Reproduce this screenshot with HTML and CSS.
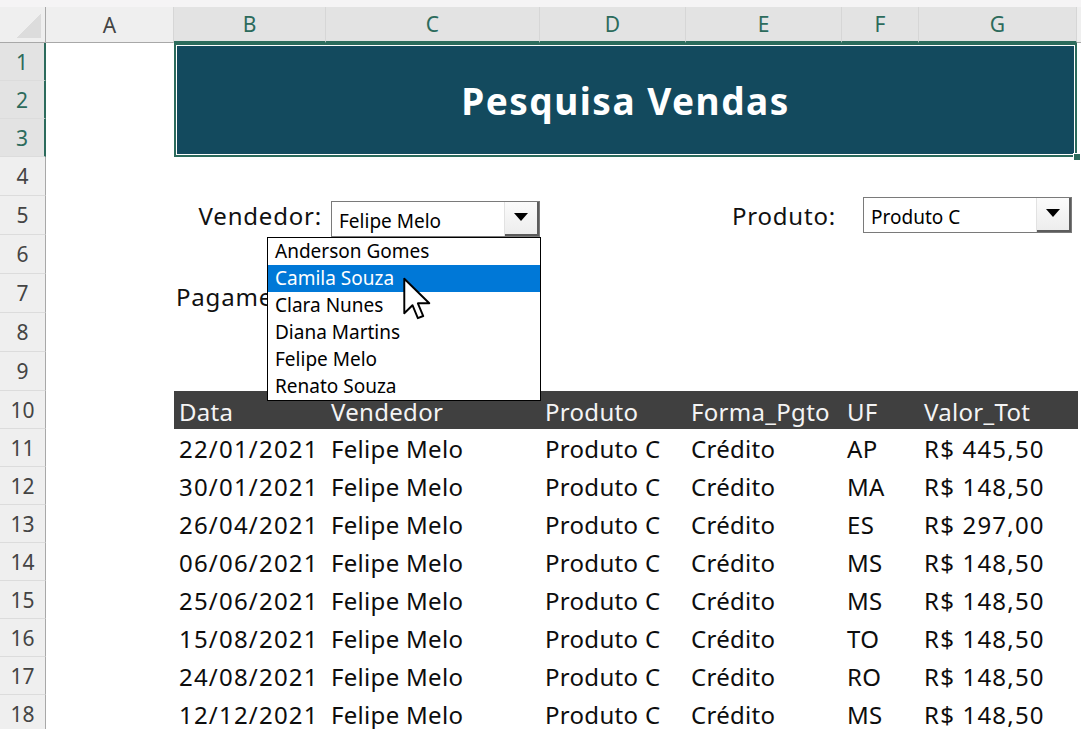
FILE: index.html
```html
<!DOCTYPE html>
<html lang="pt-BR">
<head>
    <meta charset="UTF-8">
    <meta name="viewport" content="width=device-width, initial-scale=1.0">
    <title>Pesquisa Vendas</title>
    <link rel="stylesheet" href="styles.css">
</head>
<body>
<div class="app">
    <div class="topbar"></div>
    <div class="sheet">
        <!-- column headers -->
        <div class="corner"></div>
        <div class="colhead">A</div>
        <div class="colhead sel">B</div>
        <div class="colhead sel">C</div>
        <div class="colhead sel">D</div>
        <div class="colhead sel">E</div>
        <div class="colhead sel">F</div>
        <div class="colhead sel">G</div>
        <div class="colhead filler"></div>

        <!-- row headers -->
        <div class="rowhead sel">1</div>
        <div class="rowhead sel">2</div>
        <div class="rowhead sel">3</div>
        <div class="rowhead">4</div>
        <div class="rowhead">5</div>
        <div class="rowhead">6</div>
        <div class="rowhead">7</div>
        <div class="rowhead">8</div>
        <div class="rowhead">9</div>
        <div class="rowhead">10</div>
        <div class="rowhead">11</div>
        <div class="rowhead">12</div>
        <div class="rowhead">13</div>
        <div class="rowhead">14</div>
        <div class="rowhead">15</div>
        <div class="rowhead">16</div>
        <div class="rowhead">17</div>
        <div class="rowhead">18</div>

        <div class="title">
            Pesquisa Vendas
            <span class="handle"></span>
        </div>

        <div class="label label-vend">Vendedor:</div>
        <div class="combo combo-vend">
            <span class="combo-text">Felipe Melo</span>
            <span class="combo-btn"><svg width="14" height="8" viewBox="0 0 14 8"><path d="M0 0H14L7 8Z" fill="#000"/></svg></span>
        </div>

        <div class="label label-prod">Produto:</div>
        <div class="combo combo-prod">
            <span class="combo-text">Produto C</span>
            <span class="combo-btn"><svg width="14" height="8" viewBox="0 0 14 8"><path d="M0 0H14L7 8Z" fill="#000"/></svg></span>
        </div>

        <!-- partly hidden behind the open list -->
        <div class="label label-pag">Pagamento:</div>

        <div class="table">
            <div class="th">Data</div>
            <div class="th">Vendedor</div>
            <div class="th">Produto</div>
            <div class="th">Forma_Pgto</div>
            <div class="th">UF</div>
            <div class="th">Valor_Tot</div>

            <div class="td">22/01/2021</div><div class="td">Felipe Melo</div><div class="td">Produto C</div><div class="td">Crédito</div><div class="td">AP</div><div class="td">R$ 445,50</div>
            <div class="td">30/01/2021</div><div class="td">Felipe Melo</div><div class="td">Produto C</div><div class="td">Crédito</div><div class="td">MA</div><div class="td">R$ 148,50</div>
            <div class="td">26/04/2021</div><div class="td">Felipe Melo</div><div class="td">Produto C</div><div class="td">Crédito</div><div class="td">ES</div><div class="td">R$ 297,00</div>
            <div class="td">06/06/2021</div><div class="td">Felipe Melo</div><div class="td">Produto C</div><div class="td">Crédito</div><div class="td">MS</div><div class="td">R$ 148,50</div>
            <div class="td">25/06/2021</div><div class="td">Felipe Melo</div><div class="td">Produto C</div><div class="td">Crédito</div><div class="td">MS</div><div class="td">R$ 148,50</div>
            <div class="td">15/08/2021</div><div class="td">Felipe Melo</div><div class="td">Produto C</div><div class="td">Crédito</div><div class="td">TO</div><div class="td">R$ 148,50</div>
            <div class="td">24/08/2021</div><div class="td">Felipe Melo</div><div class="td">Produto C</div><div class="td">Crédito</div><div class="td">RO</div><div class="td">R$ 148,50</div>
            <div class="td">12/12/2021</div><div class="td">Felipe Melo</div><div class="td">Produto C</div><div class="td">Crédito</div><div class="td">MS</div><div class="td">R$ 148,50</div>
        </div>
    </div>

    <!-- open list of the Vendedor combo -->
    <ul class="droplist">
        <li>Anderson Gomes</li>
        <li class="active">Camila Souza</li>
        <li>Clara Nunes</li>
        <li>Diana Martins</li>
        <li>Felipe Melo</li>
        <li>Renato Souza</li>
    </ul>

    <svg class="cursor" width="28" height="44" viewBox="0 0 13 20">
        <path d="M0.6 0.6V16.6L4.4 12.9L6.9 18.9L9.4 17.9L6.9 12H12.2Z" fill="#fff" stroke="#000" stroke-width="0.9" stroke-linejoin="round"/>
    </svg>
</div>
</body>
</html>
```

FILE: styles.css
```css
* {
    box-sizing: border-box;
}
body {
    margin: 0;
    background: #fff;
    font-family: "Noto Sans", "Open Sans", sans-serif;
    color: #111;
}
.app {
    position: relative;
    width: 1081px;
    height: 729px;
    overflow: hidden;
}
.topbar {
    height: 7px;
    background: #f5f4f5;
}
.sheet {
    display: grid;
    grid-template-columns: 46px 128px 152px 214px 146px 156px 77px 158px 1fr;
    grid-template-rows: 36px repeat(3, 38px) repeat(6, 39px) repeat(9, 38px);
}

/* headers */
.corner {
    background: #efefef linear-gradient(135deg, transparent 50%, #dcdcdc 50%) no-repeat right 4px bottom 4px / 24px 24px;
    border-right: 1px solid #a8a8a8;
    border-bottom: 1px solid #a8a8a8;
}
.colhead {
    display: flex;
    align-items: center;
    justify-content: center;
    background: #efefef;
    color: #444;
    font-size: 21px;
    border-right: 1px solid #d6d6d6;
    border-bottom: 1px solid #a8a8a8;
}
.colhead.sel {
    background: #e3e3e3;
    color: #2c6b5c;
    border-bottom: 2px solid #2c6b5c;
}
.colhead.filler {
    border-right: none;
}
.rowhead {
    grid-column: 1;
    display: flex;
    align-items: center;
    justify-content: center;
    background: #efefef;
    color: #444;
    font-size: 21px;
    border-right: 1px solid #a8a8a8;
    border-bottom: 1px solid #dcdcdc;
}
.rowhead.sel {
    background: #e3e3e3;
    color: #2c6b5c;
    border-right: 2px solid #2c6b5c;
}

/* title block */
.title {
    grid-column: 3 / 9;
    grid-row: 2 / 5;
    position: relative;
    display: flex;
    align-items: center;
    justify-content: center;
    background: #134a5e;
    border: 2px solid #2c6b5c;
    box-shadow: inset 0 0 0 1px #fff;
    color: #fff;
    font-size: 37px;
    font-weight: 700;
    letter-spacing: 1.5px;
    padding-top: 1px;
}
.handle {
    position: absolute;
    right: -6px;
    bottom: -6px;
    width: 8px;
    height: 8px;
    background: #2c6b5c;
    border: 1px solid #fff;
}

/* filter labels and combos */
.label {
    display: flex;
    align-items: center;
    font-size: 24px;
    letter-spacing: 0.8px;
    color: #111;
    white-space: nowrap;
}
.label-vend {
    grid-column: 3;
    grid-row: 6;
    justify-content: flex-end;
    padding-right: 4px;
}
.label-prod {
    grid-column: 6;
    grid-row: 6;
    justify-content: flex-end;
    padding-right: 6px;
}
.label-pag {
    grid-column: 3;
    grid-row: 8;
    width: 93px;
    overflow: hidden;
    padding-left: 2px;
    padding-top: 6px;
}
.combo {
    display: flex;
    align-self: start;
    background: #fff;
    border: 1px solid #7a7a7a;
}
.combo-vend {
    grid-column: 4;
    grid-row: 6;
    height: 36px;
    margin: 5px 0 0 5px;
}
.combo-prod {
    grid-column: 7 / 9;
    grid-row: 6;
    height: 36px;
    margin: 1px 5px 0 21px;
}
.combo-text {
    flex: 1;
    display: flex;
    align-items: center;
    padding: 3px 0 0 7px;
    font-size: 19px;
    color: #000;
}
.combo-btn {
    width: 35px;
    display: flex;
    align-items: center;
    justify-content: center;
    background: linear-gradient(#fbfbfb, #ececec);
    border-left: 1px solid #e2e2e2;
    box-shadow: inset -2px -2px 0 #5c5c5c;
    padding: 0 2px 4px 0;
}

/* data table */
.table {
    grid-column: 3 / 9;
    grid-row: 11 / 20;
    display: grid;
    grid-template-columns: 152px 214px 146px 156px 77px 1fr;
    grid-template-rows: repeat(9, 38px);
    margin-right: -1px;
    font-size: 24px;
    letter-spacing: 0.3px;
}
.th,
.td {
    display: flex;
    align-items: center;
    padding-left: 5px;
    white-space: nowrap;
}
.th {
    background: #404040;
    color: #f4f4f4;
    padding-top: 2px;
}
.td {
    color: #0d0d0d;
}
/* dates and values: Aptos digits run wider */
.td:nth-child(6n+1),
.td:nth-child(6n) {
    letter-spacing: 1.2px;
}

/* open dropdown */
.droplist {
    position: absolute;
    left: 267px;
    top: 237px;
    width: 274px;
    margin: 0;
    padding: 0;
    list-style: none;
    background: #fff;
    border: 1px solid #000;
    font-size: 19px;
}
.droplist li {
    height: 27px;
    line-height: 27px;
    padding-left: 7px;
    color: #000;
}
.droplist li.active {
    background: #0078d7;
    color: #fff;
}
.cursor {
    position: absolute;
    left: 403px;
    top: 277px;
}
```
